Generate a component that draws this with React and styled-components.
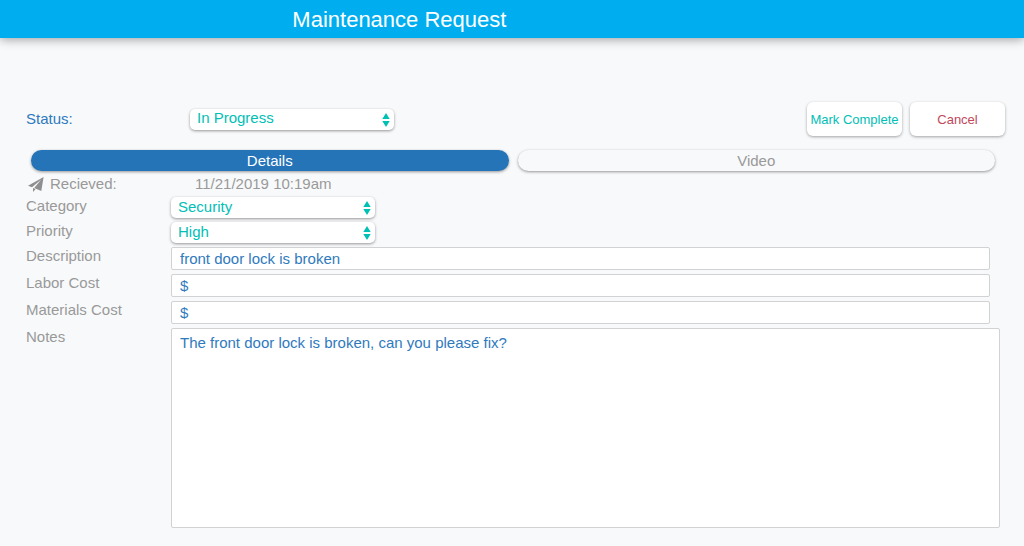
import { useState } from 'react'
import styled, { createGlobalStyle } from 'styled-components'

const colors = {
  page: '#f8f9fb',
  header: '#00aeef',
  blue: '#2574b8',
  text: '#2f7abd',
  teal: '#00c0b5',
  red: '#c0485a',
  grey: '#999999',
  border: '#d0d2d4',
}

const GlobalStyle = createGlobalStyle`
  * {
    box-sizing: border-box;
  }

  body {
    margin: 0;
    background-color: ${colors.page};
    color: ${colors.grey};
    font-family: "Helvetica Neue", "Liberation Sans", Arial, sans-serif;
    font-size: 15px;
    line-height: 18px;
  }

  button, input, select, textarea {
    font: inherit;
  }
`

const Header = styled.header`
  display: flex;
  justify-content: center;
  height: 38px;
  padding-right: 22%;
  background-color: ${colors.header};
  box-shadow: 0 1px 10px rgba(0, 0, 0, 0.4);
`

const Title = styled.h1`
  margin: 0;
  color: white;
  font-size: 22px;
  font-weight: 400;
  line-height: 39px;
`

const Main = styled.main`
  padding: 64px 24px 18px 26px;
`

const StatusBar = styled.div`
  display: flex;
  align-items: center;
  margin-right: -5px;
`

const StatusLabel = styled.label`
  width: 164px;
  color: ${colors.text};
`

const Actions = styled.div`
  display: flex;
  gap: 8px;
  margin-left: auto;
`

const ActionButton = styled.button`
  width: 95px;
  height: 34px;
  padding: 2px 0 0;
  border: none;
  border-radius: 6px;
  background-color: white;
  box-shadow: 0 1px 3px rgba(0, 0, 0, 0.35);
  color: ${(props) => props.$color};
  font-size: 13px;
  white-space: nowrap;
`

const SelectBox = styled.div`
  position: relative;
  width: 204px;
  height: 21px;
`

const StyledSelect = styled.select`
  display: block;
  width: 100%;
  height: 100%;
  padding: 0 24px 2px 7px;
  appearance: none;
  border: none;
  border-radius: 5px;
  background-color: white;
  box-shadow: 0 1px 3px rgba(0, 0, 0, 0.4);
  color: ${colors.teal};
`

const Arrows = styled.svg`
  position: absolute;
  top: 4px;
  right: 4px;
  fill: ${colors.teal};
  pointer-events: none;
`

const Tabs = styled.div`
  display: flex;
  gap: 9px;
  margin: 14px 5px 2px;
`

const Tab = styled.button`
  flex: 1;
  height: 21px;
  padding: 0;
  border: none;
  border-radius: 11px;
  background-color: ${(props) => (props.$active ? colors.blue : colors.page)};
  box-shadow: 0 1px 3px rgba(0, 0, 0, 0.4);
  color: ${(props) => (props.$active ? 'white' : colors.grey)};
`

const Received = styled.div`
  display: flex;
  align-items: center;
  height: 22px;
  margin-bottom: 2px;
  padding-left: 2px;
`

const ReceivedLabel = styled.span`
  width: 145px;
  margin-left: 6px;
`

const Form = styled.form`
  display: flex;
  flex-direction: column;
  gap: 4px;
`

const Field = styled.div`
  display: grid;
  grid-template-columns: 145px 1fr;
  align-items: start;
`

const TextInput = styled.input`
  height: 23px;
  margin-right: 10px;
  padding: 0 8px;
  border: 1px solid ${colors.border};
  border-radius: 2px;
  background-color: white;
  color: ${colors.text};
`

const NotesArea = styled.textarea`
  height: 200px;
  padding: 5px 8px;
  border: 1px solid ${colors.border};
  border-radius: 2px;
  background-color: white;
  color: ${colors.text};
  resize: none;
`

function PaperPlane() {
  return (
    <svg width="16" height="15" viewBox="0 0 16 15" fill="#8f8f8f" aria-hidden="true">
      <path d="M15.6 0L0 8.8l4 1.5L13.2 2.6 6.2 11.1l7.1 2.9z" />
      <path d="M5 11v3.9l2.6-2.8z" />
    </svg>
  )
}

function Select({ id, options }) {
  return (
    <SelectBox>
      <StyledSelect id={id} defaultValue={options[0]}>
        {options.map((option) => (
          <option key={option}>{option}</option>
        ))}
      </StyledSelect>
      <Arrows width="8" height="14" viewBox="0 0 8 14" aria-hidden="true">
        <path d="M4 0l3.7 6H.3zM4 14L.3 8h7.4z" />
      </Arrows>
    </SelectBox>
  )
}

function App() {
  const [tab, setTab] = useState('Details')

  return (
    <>
      <GlobalStyle />
      <Header>
        <Title>Maintenance Request</Title>
      </Header>
      <Main>
        <StatusBar>
          <StatusLabel htmlFor="status">Status:</StatusLabel>
          <Select id="status" options={['In Progress', 'Open', 'Complete']} />
          <Actions>
            <ActionButton type="button" $color={colors.teal}>Mark Complete</ActionButton>
            <ActionButton type="button" $color={colors.red}>Cancel</ActionButton>
          </Actions>
        </StatusBar>
        <Tabs>
          {['Details', 'Video'].map((name) => (
            <Tab key={name} type="button" $active={tab === name} onClick={() => setTab(name)}>
              {name}
            </Tab>
          ))}
        </Tabs>
        <Received>
          <PaperPlane />
          <ReceivedLabel>Recieved:</ReceivedLabel>
          <span>11/21/2019 10:19am</span>
        </Received>
        <Form>
          <Field>
            <label htmlFor="category">Category</label>
            <Select id="category" options={['Security', 'Plumbing', 'Electrical']} />
          </Field>
          <Field>
            <label htmlFor="priority">Priority</label>
            <Select id="priority" options={['High', 'Medium', 'Low']} />
          </Field>
          <Field>
            <label htmlFor="description">Description</label>
            <TextInput id="description" defaultValue="front door lock is broken" />
          </Field>
          <Field>
            <label htmlFor="labor">Labor Cost</label>
            <TextInput id="labor" defaultValue="$" />
          </Field>
          <Field>
            <label htmlFor="materials">Materials Cost</label>
            <TextInput id="materials" defaultValue="$" />
          </Field>
          <Field>
            <label htmlFor="notes">Notes</label>
            <NotesArea id="notes" defaultValue="The front door lock is broken, can you please fix?" />
          </Field>
        </Form>
      </Main>
    </>
  )
}

export default App
